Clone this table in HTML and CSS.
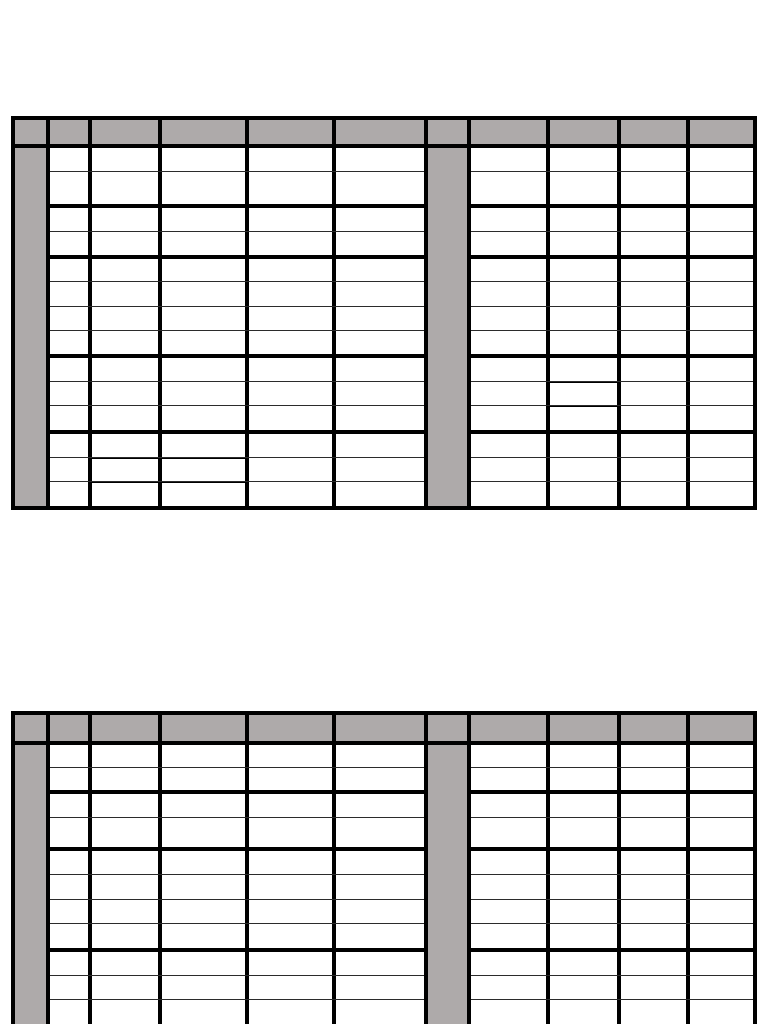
FILE: index.html
```html
<!DOCTYPE html>
<html lang="en">
<head>
<meta charset="utf-8">
<title>Grid sheets</title>
<link rel="stylesheet" href="styles.css">
</head>
<body>
<main class="page">

  <section class="sheet">
    <div class="head h24">
      <div></div><div></div><div></div><div></div><div></div><div></div><div></div><div></div><div></div><div></div><div></div>
    </div>
    <div class="body">
      <div class="band"></div>
      <div class="section left">
        <div class="group">
          <div class="row h23"><div></div><div></div><div></div><div></div><div></div></div>
          <div class="row h32"><div></div><div></div><div></div><div></div><div></div></div>
        </div>
        <div class="group">
          <div class="row h23"><div></div><div></div><div></div><div></div><div></div></div>
          <div class="row h23"><div></div><div></div><div></div><div></div><div></div></div>
        </div>
        <div class="group">
          <div class="row h22"><div></div><div></div><div></div><div></div><div></div></div>
          <div class="row h24"><div></div><div></div><div></div><div></div><div></div></div>
          <div class="row h23"><div></div><div></div><div></div><div></div><div></div></div>
          <div class="row h23"><div></div><div></div><div></div><div></div><div></div></div>
        </div>
        <div class="group">
          <div class="row h23"><div></div><div></div><div></div><div></div><div></div></div>
          <div class="row h23"><div></div><div></div><div></div><div></div><div></div></div>
          <div class="row h24"><div></div><div></div><div></div><div></div><div></div></div>
        </div>
        <div class="group">
          <div class="row h23"><div></div><div></div><div></div><div></div><div></div></div>
          <div class="row h23"><div></div><div class="heavy"></div><div class="heavy"></div><div></div><div></div></div>
          <div class="row h24"><div></div><div class="heavy"></div><div class="heavy"></div><div></div><div></div></div>
        </div>
      </div>
      <div class="band"></div>
      <div class="section right">
        <div class="group">
          <div class="row h23"><div></div><div></div><div></div><div></div></div>
          <div class="row h32"><div></div><div></div><div></div><div></div></div>
        </div>
        <div class="group">
          <div class="row h23"><div></div><div></div><div></div><div></div></div>
          <div class="row h23"><div></div><div></div><div></div><div></div></div>
        </div>
        <div class="group">
          <div class="row h22"><div></div><div></div><div></div><div></div></div>
          <div class="row h24"><div></div><div></div><div></div><div></div></div>
          <div class="row h23"><div></div><div></div><div></div><div></div></div>
          <div class="row h23"><div></div><div></div><div></div><div></div></div>
        </div>
        <div class="group">
          <div class="row h23"><div></div><div></div><div></div><div></div></div>
          <div class="row h23"><div></div><div class="heavy"></div><div></div><div></div></div>
          <div class="row h24"><div></div><div class="heavy"></div><div></div><div></div></div>
        </div>
        <div class="group">
          <div class="row h23"><div></div><div></div><div></div><div></div></div>
          <div class="row h23"><div></div><div></div><div></div><div></div></div>
          <div class="row h24"><div></div><div></div><div></div><div></div></div>
        </div>
      </div>
    </div>
  </section>

  <section class="sheet">
    <div class="head h26">
      <div></div><div></div><div></div><div></div><div></div><div></div><div></div><div></div><div></div><div></div><div></div>
    </div>
    <div class="body">
      <div class="band"></div>
      <div class="section left">
        <div class="group">
          <div class="row h22"><div></div><div></div><div></div><div></div><div></div></div>
          <div class="row h22"><div></div><div></div><div></div><div></div><div></div></div>
        </div>
        <div class="group">
          <div class="row h23"><div></div><div></div><div></div><div></div><div></div></div>
          <div class="row h29"><div></div><div></div><div></div><div></div><div></div></div>
        </div>
        <div class="group">
          <div class="row h23"><div></div><div></div><div></div><div></div><div></div></div>
          <div class="row h24"><div></div><div></div><div></div><div></div><div></div></div>
          <div class="row h23"><div></div><div></div><div></div><div></div><div></div></div>
          <div class="row h24"><div></div><div></div><div></div><div></div><div></div></div>
        </div>
        <div class="group">
          <div class="row h23"><div></div><div></div><div></div><div></div><div></div></div>
          <div class="row h23"><div></div><div></div><div></div><div></div><div></div></div>
          <div class="row h24"><div></div><div></div><div></div><div></div><div></div></div>
        </div>
        <div class="group">
          <div class="row h23"><div></div><div></div><div></div><div></div><div></div></div>
          <div class="row h23"><div></div><div></div><div></div><div></div><div></div></div>
        </div>
      </div>
      <div class="band"></div>
      <div class="section right">
        <div class="group">
          <div class="row h22"><div></div><div></div><div></div><div></div></div>
          <div class="row h22"><div></div><div></div><div></div><div></div></div>
        </div>
        <div class="group">
          <div class="row h23"><div></div><div></div><div></div><div></div></div>
          <div class="row h29"><div></div><div></div><div></div><div></div></div>
        </div>
        <div class="group">
          <div class="row h23"><div></div><div></div><div></div><div></div></div>
          <div class="row h24"><div></div><div></div><div></div><div></div></div>
          <div class="row h23"><div></div><div></div><div></div><div></div></div>
          <div class="row h24"><div></div><div></div><div></div><div></div></div>
        </div>
        <div class="group">
          <div class="row h23"><div></div><div></div><div></div><div></div></div>
          <div class="row h23"><div></div><div></div><div></div><div></div></div>
          <div class="row h24"><div></div><div></div><div></div><div></div></div>
        </div>
        <div class="group">
          <div class="row h23"><div></div><div></div><div></div><div></div></div>
          <div class="row h23"><div></div><div></div><div></div><div></div></div>
        </div>
      </div>
    </div>
  </section>

</main>
</body>
</html>
```

FILE: styles.css
```css
html, body {
  margin: 0;
  padding: 0;
  background: #ffffff;
  font-family: "Liberation Sans", Arial, sans-serif;
}

.page {
  display: flex;
  flex-direction: column;
  gap: 201px;
  padding: 116px 0 0 11px;
}

.sheet {
  width: 746px;
  box-sizing: border-box;
  background: #000000;
  padding: 4px;
  display: flex;
  flex-direction: column;
  gap: 4px;
}

.head {
  display: grid;
  grid-template-columns: 31px 38px 66px 83px 83px 88px 39px 75px 67px 65px 63px;
  column-gap: 4px;
}

.head > div {
  background: #aeaaaa;
}

.body {
  display: grid;
  grid-template-columns: 31px 374px 39px 282px;
  column-gap: 4px;
}

.band {
  background: #aeaaaa;
}

.section {
  display: flex;
  flex-direction: column;
  gap: 4px;
}

.group {
  display: flex;
  flex-direction: column;
  gap: 1px;
  background: #2b2b2b;
}

.row {
  display: grid;
  column-gap: 4px;
  background: #000000;
}

.left .row {
  grid-template-columns: 38px 66px 83px 83px 88px;
}

.right .row {
  grid-template-columns: 75px 67px 65px 63px;
}

.row > div {
  background: #ffffff;
  box-sizing: border-box;
}

.row > .heavy {
  border-top: 1px solid #000000;
}

.h22 { height: 22px; }
.h23 { height: 23px; }
.h24 { height: 24px; }
.h26 { height: 26px; }
.h29 { height: 29px; }
.h32 { height: 32px; }
```
